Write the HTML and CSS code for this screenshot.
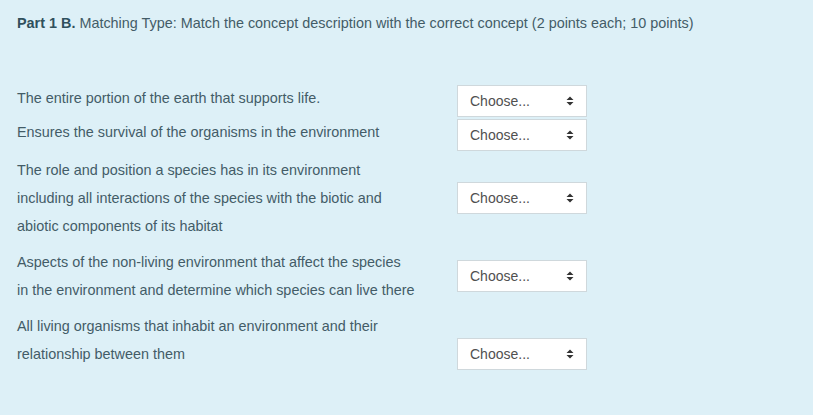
FILE: index.html
```html
<!DOCTYPE html>
<html>
<head>
<meta charset="utf-8">
<link rel="stylesheet" href="styles.css">
</head>
<body>
<div class="formulation">
  <p class="title"><b>Part 1 B.</b> Matching Type: Match the concept description with the correct concept (2 points each; 10 points)</p>
  <div class="rows">
    <div class="row r1">
      <div class="text">The entire portion of the earth that supports life.</div>
      <div class="select"><span>Choose...</span><svg width="8" height="10" viewBox="0 0 8 10"><path d="M4 0.5 L7.5 4 L0.5 4 Z M4 9.5 L7.5 6 L0.5 6 Z" fill="#333"/></svg></div>
    </div>
    <div class="row r2">
      <div class="text">Ensures the survival of the organisms in the environment</div>
      <div class="select"><span>Choose...</span><svg width="8" height="10" viewBox="0 0 8 10"><path d="M4 0.5 L7.5 4 L0.5 4 Z M4 9.5 L7.5 6 L0.5 6 Z" fill="#333"/></svg></div>
    </div>
    <div class="row r3">
      <div class="text">The role and position a species has in its environment<br>including all interactions of the species with the biotic and<br>abiotic components of its habitat</div>
      <div class="select"><span>Choose...</span><svg width="8" height="10" viewBox="0 0 8 10"><path d="M4 0.5 L7.5 4 L0.5 4 Z M4 9.5 L7.5 6 L0.5 6 Z" fill="#333"/></svg></div>
    </div>
    <div class="row r4">
      <div class="text">Aspects of the non-living environment that affect the species<br>in the environment and determine which species can live there</div>
      <div class="select"><span>Choose...</span><svg width="8" height="10" viewBox="0 0 8 10"><path d="M4 0.5 L7.5 4 L0.5 4 Z M4 9.5 L7.5 6 L0.5 6 Z" fill="#333"/></svg></div>
    </div>
    <div class="row r5">
      <div class="text">All living organisms that inhabit an environment and their<br>relationship between them</div>
      <div class="select"><span>Choose...</span><svg width="8" height="10" viewBox="0 0 8 10"><path d="M4 0.5 L7.5 4 L0.5 4 Z M4 9.5 L7.5 6 L0.5 6 Z" fill="#333"/></svg></div>
    </div>
  </div>
</div>
</body>
</html>
```
FILE: styles.css
```css
html, body {
  margin: 0;
  padding: 0;
  background: #ddf0f7;
}
.formulation {
  width: 813px;
  height: 415px;
  box-sizing: border-box;
  padding: 13px 0 0 17px;
  font-family: "Liberation Sans", Arial, sans-serif;
  font-size: 14.4px;
  color: #435c67;
}
.title {
  margin: 0;
  line-height: 20px;
}
.title b {
  color: #30505d;
}
.rows {
  margin-top: 51px;
  display: flex;
  flex-direction: column;
}
.row {
  display: flex;
}
.text {
  width: 440px;
  line-height: 28px;
}
.select {
  box-sizing: border-box;
  width: 130px;
  height: 32px;
  background: #fff;
  border: 1px solid #cfd8dc;
  display: flex;
  align-items: center;
  justify-content: space-between;
  padding: 0 12px 0 12px;
  font-size: 14px;
  color: #505050;
}
.r1, .r2 { align-items: flex-start; }
.r1 .select, .r2 .select { margin-top: 1px; margin-bottom: 1px; }
.r2 { margin-bottom: 4px; }
.r3 { align-items: center; margin-bottom: 8px; }
.r4 { align-items: center; margin-bottom: 8px; }
.r5 { align-items: flex-end; }
.r5 .select { margin-bottom: -2px; }
```
